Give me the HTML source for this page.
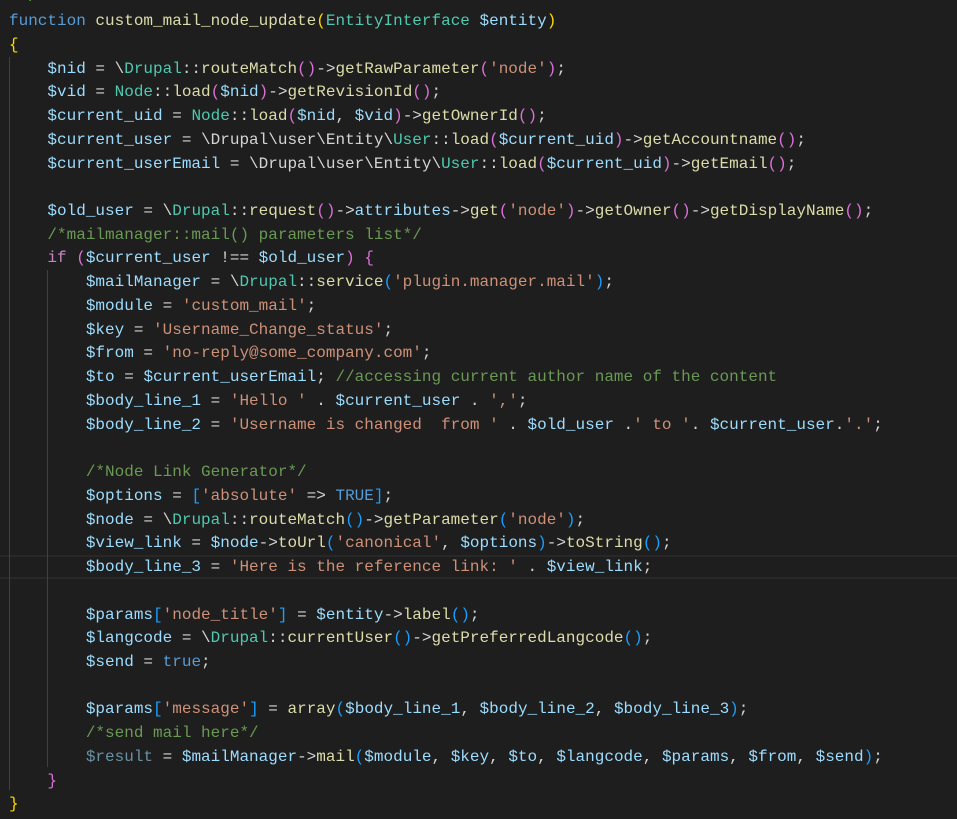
<!DOCTYPE html>
<html><head><meta charset="utf-8"><style>
html,body{margin:0;padding:0;background:#1e1e1e;width:957px;height:819px;overflow:hidden}
#c{position:absolute;left:9px;top:-13.6px;font-family:"Liberation Mono",monospace;font-size:16px;line-height:23.73px;color:#d4d4d4;white-space:pre}
.k{color:#569cd6}.q{color:#c586c0}.f{color:#dcdcaa}.v{color:#9cdcfe}.c{color:#4ec9b0}.s{color:#ce9178}.m{color:#6a9955}
.b1{color:#ffd700}.b2{color:#da70d6}.b3{color:#179fff}.d{color:#9cdcfe;opacity:.6}
.g{position:absolute;width:1px;background:#404040}
#hl{position:absolute;left:0;width:957px;top:555px;height:24px;border-top:2px solid #282828;border-bottom:2px solid #282828;box-sizing:border-box}
</style></head><body>
<div id="hl"></div>
<div class="g" style="left:9px;top:57px;height:733px"></div>
<div class="g" style="left:47px;top:270px;height:497px"></div>
<div id="c"><span class="m"> */</span>
<span class="k">function</span> <span class="f">custom_mail_node_update</span><span class="b1">(</span><span class="c">EntityInterface</span> <span class="v">$entity</span><span class="b1">)</span>
<span class="b1">{</span>
    <span class="v">$nid</span> = \<span class="c">Drupal</span>::<span class="f">routeMatch</span><span class="b2">()</span>-&gt;<span class="f">getRawParameter</span><span class="b2">(</span><span class="s">'node'</span><span class="b2">)</span>;
    <span class="v">$vid</span> = <span class="c">Node</span>::<span class="f">load</span><span class="b2">(</span><span class="v">$nid</span><span class="b2">)</span>-&gt;<span class="f">getRevisionId</span><span class="b2">()</span>;
    <span class="v">$current_uid</span> = <span class="c">Node</span>::<span class="f">load</span><span class="b2">(</span><span class="v">$nid</span>, <span class="v">$vid</span><span class="b2">)</span>-&gt;<span class="f">getOwnerId</span><span class="b2">()</span>;
    <span class="v">$current_user</span> = \Drupal\user\Entity\<span class="c">User</span>::<span class="f">load</span><span class="b2">(</span><span class="v">$current_uid</span><span class="b2">)</span>-&gt;<span class="f">getAccountname</span><span class="b2">()</span>;
    <span class="v">$current_userEmail</span> = \Drupal\user\Entity\<span class="c">User</span>::<span class="f">load</span><span class="b2">(</span><span class="v">$current_uid</span><span class="b2">)</span>-&gt;<span class="f">getEmail</span><span class="b2">()</span>;

    <span class="v">$old_user</span> = \<span class="c">Drupal</span>::<span class="f">request</span><span class="b2">()</span>-&gt;<span class="v">attributes</span>-&gt;<span class="f">get</span><span class="b2">(</span><span class="s">'node'</span><span class="b2">)</span>-&gt;<span class="f">getOwner</span><span class="b2">()</span>-&gt;<span class="f">getDisplayName</span><span class="b2">()</span>;
    <span class="m">/*mailmanager::mail() parameters list*/</span>
    <span class="q">if</span> <span class="b2">(</span><span class="v">$current_user</span> !== <span class="v">$old_user</span><span class="b2">)</span> <span class="b2">{</span>
        <span class="v">$mailManager</span> = \<span class="c">Drupal</span>::<span class="f">service</span><span class="b3">(</span><span class="s">'plugin.manager.mail'</span><span class="b3">)</span>;
        <span class="v">$module</span> = <span class="s">'custom_mail'</span>;
        <span class="v">$key</span> = <span class="s">'Username_Change_status'</span>;
        <span class="v">$from</span> = <span class="s">'no-reply@some_company.com'</span>;
        <span class="v">$to</span> = <span class="v">$current_userEmail</span>; <span class="m">//accessing current author name of the content</span>
        <span class="v">$body_line_1</span> = <span class="s">'Hello '</span> . <span class="v">$current_user</span> . <span class="s">','</span>;
        <span class="v">$body_line_2</span> = <span class="s">'Username is changed  from '</span> . <span class="v">$old_user</span> .<span class="s">' to '</span>. <span class="v">$current_user</span>.<span class="s">'.'</span>;

        <span class="m">/*Node Link Generator*/</span>
        <span class="v">$options</span> = <span class="b3">[</span><span class="s">'absolute'</span> =&gt; <span class="k">TRUE</span><span class="b3">]</span>;
        <span class="v">$node</span> = \<span class="c">Drupal</span>::<span class="f">routeMatch</span><span class="b3">()</span>-&gt;<span class="f">getParameter</span><span class="b3">(</span><span class="s">'node'</span><span class="b3">)</span>;
        <span class="v">$view_link</span> = <span class="v">$node</span>-&gt;<span class="f">toUrl</span><span class="b3">(</span><span class="s">'canonical'</span>, <span class="v">$options</span><span class="b3">)</span>-&gt;<span class="f">toString</span><span class="b3">()</span>;
        <span class="v">$body_line_3</span> = <span class="s">'Here is the reference link: '</span> . <span class="v">$view_link</span>;

        <span class="v">$params</span><span class="b3">[</span><span class="s">'node_title'</span><span class="b3">]</span> = <span class="v">$entity</span>-&gt;<span class="f">label</span><span class="b3">()</span>;
        <span class="v">$langcode</span> = \<span class="c">Drupal</span>::<span class="f">currentUser</span><span class="b3">()</span>-&gt;<span class="f">getPreferredLangcode</span><span class="b3">()</span>;
        <span class="v">$send</span> = <span class="k">true</span>;

        <span class="v">$params</span><span class="b3">[</span><span class="s">'message'</span><span class="b3">]</span> = <span class="f">array</span><span class="b3">(</span><span class="v">$body_line_1</span>, <span class="v">$body_line_2</span>, <span class="v">$body_line_3</span><span class="b3">)</span>;
        <span class="m">/*send mail here*/</span>
        <span class="d">$result</span> = <span class="v">$mailManager</span>-&gt;<span class="f">mail</span><span class="b3">(</span><span class="v">$module</span>, <span class="v">$key</span>, <span class="v">$to</span>, <span class="v">$langcode</span>, <span class="v">$params</span>, <span class="v">$from</span>, <span class="v">$send</span><span class="b3">)</span>;
    <span class="b2">}</span>
<span class="b1">}</span></div>
</body></html>
